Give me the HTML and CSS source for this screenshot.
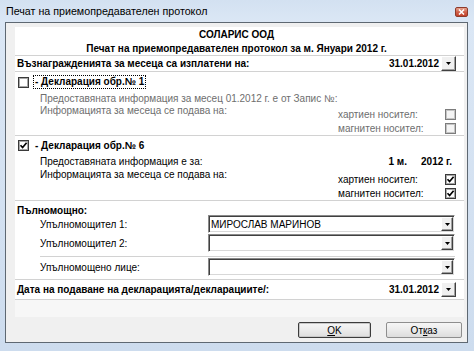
FILE: index.html
```html
<!DOCTYPE html>
<html>
<head>
<meta charset="utf-8">
<link rel="stylesheet" href="styles.css">
</head>
<body>
<div class="window">
  <div class="titlebar">
    <span class="title">Печат на приемопредавателен протокол</span>
    <span class="close"><svg width="7" height="6" viewBox="0 0 7 6"><path d="M1 0.5 L6 5.5 M6 0.5 L1 5.5" stroke="#fff" stroke-width="1.5"/></svg></span>
  </div>
  <div class="client">
    <div class="panel">
      <div class="row center company b">СОЛАРИС ООД</div>
      <div class="row center heading b sep">Печат на приемопредавателен протокол за м. Януари 2012 г.</div>
      <div class="row paid sep">
        <span class="b">Възнагражденията за месеца са изплатени на:</span>
        <span class="b date">31.01.2012</span>
        <span class="dd"><svg width="5" height="3" viewBox="0 0 5 3"><polygon points="0,0 5,0 2.5,3" fill="#000"/></svg></span>
      </div>

      <div class="row dhead d1"><span class="cb"></span><span class="b focus">- Декларация обр.№ 1</span></div>
      <div class="row pred1 gray">Предоставяната информация за месец 01.2012 г. е от Запис №:</div>
      <div class="media media1 sep gray">
        <div class="mlabel">Информацията за месеца се подава на:</div>
        <div class="opts">
          <div class="opt">хартиен носител:<span class="cb dis"></span></div>
          <div class="opt">магнитен носител:<span class="cb dis"></span></div>
        </div>
      </div>

      <div class="row dhead d6"><span class="cb"><svg width="9" height="9" viewBox="0 0 9 9"><path d="M1.5 4.2 L3.6 6.5 L7.6 1.8" fill="none" stroke="#000" stroke-width="1.7"/></svg></span><span class="b nofocus">- Декларация обр.№ 6</span></div>
      <div class="row pred2">
        <span>Предоставяната информация е за:</span>
        <span class="b month">1 м.</span>
        <span class="b year">2012 г.</span>
      </div>
      <div class="media media2 sep">
        <div class="mlabel">Информацията за месеца се подава на:</div>
        <div class="opts">
          <div class="opt">хартиен носител:<span class="cb"><svg width="9" height="9" viewBox="0 0 9 9"><path d="M1.5 4.2 L3.6 6.5 L7.6 1.8" fill="none" stroke="#000" stroke-width="1.7"/></svg></span></div>
          <div class="opt">магнитен носител:<span class="cb"><svg width="9" height="9" viewBox="0 0 9 9"><path d="M1.5 4.2 L3.6 6.5 L7.6 1.8" fill="none" stroke="#000" stroke-width="1.7"/></svg></span></div>
        </div>
      </div>

      <div class="row pulnom b">Пълномощно:</div>
      <div class="row prow prow1">
        <span class="plabel">Упълномощител 1:</span>
        <span class="combo"><span class="cval">МИРОСЛАВ МАРИНОВ</span><span class="dd cdd"><svg width="5" height="3" viewBox="0 0 5 3"><polygon points="0,0 5,0 2.5,3" fill="#000"/></svg></span></span>
      </div>
      <div class="row prow">
        <span class="plabel">Упълномощител 2:</span>
        <span class="combo"><span class="cval"></span><span class="dd cdd"><svg width="5" height="3" viewBox="0 0 5 3"><polygon points="0,0 5,0 2.5,3" fill="#000"/></svg></span></span>
      </div>
      <div class="iline"></div>
      <div class="row prow prow3 sep">
        <span class="plabel">Упълномощено лице:</span>
        <span class="combo"><span class="cval"></span><span class="dd cdd"><svg width="5" height="3" viewBox="0 0 5 3"><polygon points="0,0 5,0 2.5,3" fill="#000"/></svg></span></span>
      </div>
      <div class="row daterow sep">
        <span class="b">Дата на подаване на декларацията/декларациите/:</span>
        <span class="b date">31.01.2012</span>
        <span class="dd"><svg width="5" height="3" viewBox="0 0 5 3"><polygon points="0,0 5,0 2.5,3" fill="#000"/></svg></span>
      </div>
      <div class="filler"></div>
    </div>
    <div class="buttons">
      <span class="btn ok"><u>O</u>K</span>
      <span class="btn cancel">От<u>к</u>аз</span>
    </div>
  </div>
</div>
</body>
</html>
```

FILE: styles.css
```css
* { box-sizing: border-box; }

body {
  margin: 0;
  width: 474px;
  height: 351px;
  overflow: hidden;
}

.window {
  width: 474px;
  height: 351px;
  padding: 0 6px 8px 5px;
  display: flex;
  flex-direction: column;
  background: linear-gradient(180deg, #d3e1f1 0, #dbe7f5 22px, #cddcee 100%);
  font-family: "Liberation Sans", Arial, sans-serif;
  font-size: 10px;
  color: #000;
}

.titlebar {
  height: 22px;
  display: flex;
  align-items: flex-start;
  flex: 0 0 22px;
}

.title {
  font-size: 10.7px;
  line-height: 13px;
  margin: 5px 0 0 1px;
  color: #000;
}

.close {
  margin-left: auto;
  margin-top: 7px;
  width: 13px;
  height: 10px;
  border-radius: 2px;
  border: 1px solid #8d3b2b;
  background: linear-gradient(180deg, #e7a38f 0, #d0624a 50%, #c2412a 100%);
  display: flex;
  align-items: center;
  justify-content: center;
}

.client {
  flex: 1;
  border: 1px solid #5e6872;
  background: #f0f0f0;
  padding: 4px 3px 0 9px;
  display: flex;
  flex-direction: column;
}

.panel {
  height: 290px;
  background: #fff;
  display: flex;
  flex-direction: column;
}

.b { font-weight: bold; }
.gray { color: #6e6e6e; }

.row {
  display: flex;
  align-items: center;
  padding: 0 8px 0 2px;
  white-space: nowrap;
}

.center { justify-content: center; }
.sep { border-bottom: 1px solid #d2d2d2; }

.company { height: 14px; }
.heading { height: 15px; }
.paid { height: 16px; }

.date { margin-left: auto; margin-right: 2px; }

.dd {
  width: 15px;
  height: 15px;
  background: #f0f0f0;
  border: 1px solid;
  border-color: #ffffff #404040 #404040 #ffffff;
  box-shadow: inset -1px -1px 0 #a0a0a0;
  display: flex;
  align-items: center;
  justify-content: center;
}

.dhead { padding-left: 3px; }
.d1 { height: 20px; }
.d6 { height: 19px; }

.cb {
  width: 11px;
  height: 11px;
  flex: 0 0 11px;
  border: 1px solid #3a3a3a;
  background: #fff;
  box-shadow: inset 0 0 0 1px #a8a8a8;
  display: flex;
  align-items: center;
  justify-content: center;
}

.cb.dis {
  border-color: #7c7c7c;
  background: #f4f4f4;
  box-shadow: inset 0 0 0 1px #c4c4c4;
}

.dhead .cb { margin-right: 4px; }

.focus {
  border: 1px dotted #000;
  padding: 0 1px;
  line-height: 12px;
}

.nofocus {
  border: 1px solid transparent;
  padding: 0 1px;
  line-height: 12px;
}

.pred1 { height: 12px; padding-left: 25px; }
.pred2 { height: 13px; padding-left: 25px; padding-right: 12px; }

.month { margin-left: auto; }
.year { margin-left: 14px; }

.media {
  display: flex;
  align-items: flex-start;
  padding: 0 8px 0 25px;
  white-space: nowrap;
}

.media1 { height: 32px; }
.media2 { height: 33px; }

.mlabel {
  flex: 1;
  line-height: 13px;
}

.opts { width: 118px; }
.media1 .opts { padding-top: 3px; }
.media2 .opts { padding-top: 4px; }

.opt {
  height: 14px;
  display: flex;
  align-items: center;
  justify-content: space-between;
}

.pulnom {
  height: 14px;
  padding-top: 4px;
}

.prow {
  height: 18px;
  padding-left: 25px;
}

.prow1 { margin-bottom: 1px; }

.plabel { flex: 0 0 168px; }

.combo {
  width: 247px;
  height: 18px;
  border: 1px solid;
  border-color: #8a8a8a #ffffff #ffffff #8a8a8a;
  box-shadow: inset 1px 1px 0 #404040, inset -1px -1px 0 #d8d8d8;
  background: #fff;
  display: flex;
  align-items: center;
  padding: 0 1px 0 2px;
}

.cval { flex: 1; }

.cdd {
  width: 12px;
  height: 14px;
}

.iline {
  height: 1px;
  background: #d2d2d2;
  margin: 4px 9px 1px 25px;
}

.prow3 {
  height: 22px;
  padding-bottom: 3px;
}

.daterow { height: 20px; }

.filler {
  flex: 1;
  background: #f7f7f7;
}

.buttons {
  display: flex;
  justify-content: flex-end;
  gap: 15px;
  margin-top: 5px;
  padding-right: 2px;
}

.btn {
  height: 16px;
  border: 1px solid #8e8e8e;
  border-radius: 2px;
  background: linear-gradient(180deg, #f6f6f6 0, #ebebeb 50%, #dddddd 100%);
  display: flex;
  align-items: center;
  justify-content: center;
  font-size: 10px;
}

.btn.ok {
  width: 73px;
  border-color: #3c3c3c;
  box-shadow: inset 0 0 0 1px #c8c8c8;
}

.btn.cancel { width: 76px; }
```
